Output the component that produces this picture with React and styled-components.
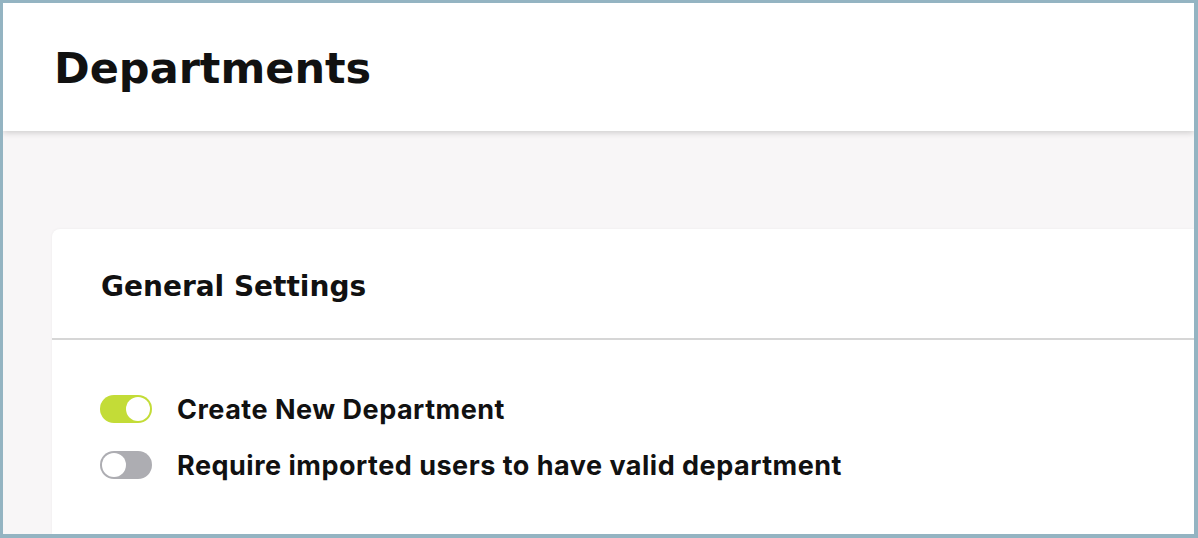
import React, { useState } from "react";
import styled, { createGlobalStyle } from "styled-components";

const GlobalStyle = createGlobalStyle`
  html, body {
    margin: 0;
    padding: 0;
  }
  body {
    font-family: "Inter", "Noto Sans", sans-serif;
    color: #111111;
  }
`;

const Frame = styled.div`
  box-sizing: border-box;
  width: 1198px;
  height: 538px;
  border-style: solid;
  border-color: #94b4c2;
  border-width: 3px 4px 4px 3px;
  overflow: hidden;
  display: flex;
  flex-direction: column;
  background: #f8f6f7;
`;

const Header = styled.header`
  flex: 0 0 128px;
  display: flex;
  align-items: center;
  padding: 0 0 0 51px;
  box-sizing: border-box;
  background: #ffffff;
  box-shadow: 0 2px 6px rgba(0, 0, 0, 0.16);
  position: relative;
  z-index: 1;
`;

const PageTitle = styled.h1`
  margin: 2px 0 0;
  font-family: "DejaVu Sans", sans-serif;
  font-weight: 700;
  font-size: 43px;
  line-height: 1;
  color: #111111;
`;

const Main = styled.main`
  flex: 1;
  padding: 98px 0 0 49px;
`;

const Card = styled.section`
  background: #ffffff;
  border-radius: 8px 0 0 0;
  margin-right: -20px;
  height: 100%;
  box-shadow: 0 0 3px rgba(0, 0, 0, 0.05);
`;

const CardHeader = styled.div`
  height: 111px;
  display: flex;
  align-items: center;
  padding: 0 0 0 49px;
  box-sizing: border-box;
  border-bottom: 2px solid #d6d6d6;
`;

const CardTitle = styled.h2`
  margin: 6px 0 0;
  font-family: "DejaVu Sans", sans-serif;
  font-weight: 700;
  font-size: 28px;
  line-height: 1;
`;

const CardBody = styled.div`
  padding: 55px 0 0 48px;
  display: flex;
  flex-direction: column;
  gap: 28px;
`;

const Row = styled.label`
  display: flex;
  align-items: center;
  gap: 25px;
  cursor: pointer;
`;

const Track = styled.span`
  position: relative;
  flex: 0 0 52px;
  height: 28px;
  border-radius: 14px;
  background: ${({ $on }) => ($on ? "#c3dc37" : "#adadb2")};
`;

const Knob = styled.span`
  position: absolute;
  top: 2px;
  left: ${({ $on }) => ($on ? "26px" : "2px")};
  width: 24px;
  height: 24px;
  border-radius: 50%;
  background: #ffffff;
`;

const Label = styled.span`
  font-family: "Inter", sans-serif;
  font-weight: 700;
  font-size: 27px;
  letter-spacing: 0.5px;
  line-height: 1;
  color: #111111;
`;

function Toggle({ on, onChange, children }) {
  return (
    <Row onClick={onChange}>
      <Track $on={on}>
        <Knob $on={on} />
      </Track>
      <Label>{children}</Label>
    </Row>
  );
}

export default function App() {
  const [createNew, setCreateNew] = useState(true);
  const [requireValid, setRequireValid] = useState(false);

  return (
    <>
      <GlobalStyle />
      <Frame>
        <Header>
          <PageTitle>Departments</PageTitle>
        </Header>
        <Main>
          <Card>
            <CardHeader>
              <CardTitle>General Settings</CardTitle>
            </CardHeader>
            <CardBody>
              <Toggle on={createNew} onChange={() => setCreateNew(!createNew)}>
                Create New Department
              </Toggle>
              <Toggle on={requireValid} onChange={() => setRequireValid(!requireValid)}>
                Require imported users to have valid department
              </Toggle>
            </CardBody>
          </Card>
        </Main>
      </Frame>
    </>
  );
}
